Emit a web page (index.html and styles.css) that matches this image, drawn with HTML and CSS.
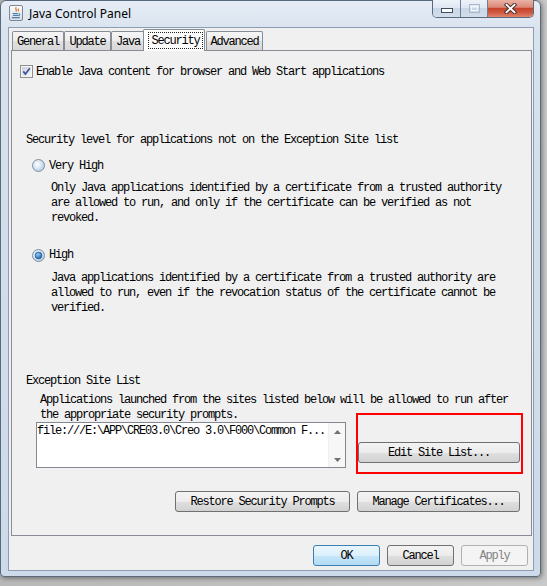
FILE: index.html
```html
<!DOCTYPE html>
<html>
<head>
<meta charset="utf-8">
<title>Java Control Panel</title>
<link rel="stylesheet" href="styles.css">
</head>
<body>
<div class="window">
  <div class="titlebar">
    <svg class="app-icon" width="14" height="16" viewBox="0 0 14 16">
      <defs><linearGradient id="ig" x1="0" y1="0" x2="0" y2="1"><stop offset="0" stop-color="#fdfdfd"/><stop offset="1" stop-color="#d6dce4"/></linearGradient></defs>
      <rect x="0.5" y="0.5" width="13" height="15" rx="1.5" fill="url(#ig)" stroke="#7d8794"/>
      <path d="M7.3 2.3c-2 1.5 1.3 2.4-.4 4.3M9.5 3.6c-1.3.9.7 1.5-.3 2.7" stroke="#e2651a" fill="none" stroke-width="1.1"/>
      <path d="M3.5 8.5h5.5M4 10.4h5M2.8 12.6h8M9.6 8.8c1.6-.2 1.5 1.6-.5 1.9" stroke="#4f7ea6" fill="none" stroke-width="1.1"/>
    </svg>
    <span class="title">Java Control Panel</span>
    <div class="caption-buttons">
      <div class="cap cap-min">
        <svg width="12" height="5" viewBox="0 0 12 5"><rect x="0.5" y="0.5" width="11" height="4" fill="#fff" stroke="#3e4e62"/></svg>
      </div>
      <div class="cap cap-max">
        <svg width="11" height="9" viewBox="0 0 11 9"><rect x="0.5" y="0.5" width="10" height="8" fill="none" stroke="#a9b8ca"/><rect x="2.5" y="2.5" width="6" height="4" fill="none" stroke="#f4f7fb"/></svg>
      </div>
      <div class="cap cap-close">
        <svg width="13" height="11" viewBox="0 0 13 11"><path d="M2.5 1.8 L10.5 9.2 M10.5 1.8 L2.5 9.2" stroke="#47302c" stroke-width="3.8" stroke-linecap="square"/><path d="M2.5 1.8 L10.5 9.2 M10.5 1.8 L2.5 9.2" stroke="#ffffff" stroke-width="1.9" stroke-linecap="square"/></svg>
      </div>
    </div>
  </div>

  <div class="client">
    <div class="tabs">
      <div class="tab tab-general">General</div>
      <div class="tab tab-update">Update</div>
      <div class="tab tab-java">Java</div>
      <div class="tab tab-selected"><span class="focus">Security</span></div>
      <div class="tab tab-advanced">Advanced</div>
    </div>

    <div class="panel">
      <div class="check-row">
        <svg width="13" height="13" viewBox="0 0 13 13">
          <defs><linearGradient id="cg" x1="0" y1="0" x2="1" y2="1"><stop offset="0" stop-color="#cbd0d7"/><stop offset="1" stop-color="#f7f7f7"/></linearGradient></defs>
          <rect x="0.5" y="0.5" width="12" height="12" fill="#f6f6f6" stroke="#8e8f8f"/>
          <rect x="2" y="2" width="9" height="9" fill="url(#cg)"/>
          <path d="M3.3 6.4 L5.4 9 L9.8 3.2" stroke="#3a56a0" stroke-width="1.7" fill="none"/>
        </svg>
        <span class="nudge">Enable Java content for browser and Web Start applications</span>
      </div>

      <div class="heading">Security level for applications not on the Exception Site list</div>

      <div class="radio-row radio-first">
        <svg width="13" height="13" viewBox="0 0 13 13">
          <defs><radialGradient id="rg1" cx="0.4" cy="0.4" r="0.6"><stop offset="0" stop-color="#ffffff"/><stop offset="1" stop-color="#b9d1ea"/></radialGradient></defs>
          <circle cx="6.5" cy="6.5" r="6" fill="url(#rg1)" stroke="#7e8fa3"/>
        </svg>
        <span class="nudge">Very High</span>
      </div>
      <div class="desc">Only Java applications identified by a certificate from a trusted authority<br>are allowed to run, and only if the certificate can be verified as not<br>revoked.</div>

      <div class="radio-row radio-second">
        <svg width="13" height="13" viewBox="0 0 13 13">
          <defs>
            <radialGradient id="rg2" cx="0.4" cy="0.4" r="0.6"><stop offset="0" stop-color="#ffffff"/><stop offset="1" stop-color="#b9d1ea"/></radialGradient>
            <radialGradient id="rd2" cx="0.4" cy="0.35" r="0.7"><stop offset="0" stop-color="#8fd0f5"/><stop offset="1" stop-color="#1b5aa0"/></radialGradient>
          </defs>
          <circle cx="6.5" cy="6.5" r="6" fill="url(#rg2)" stroke="#7e8fa3"/>
          <circle cx="6.5" cy="6.5" r="3.4" fill="url(#rd2)" stroke="#24508a" stroke-width="0.6"/>
        </svg>
        <span>High</span>
      </div>
      <div class="desc">Java applications identified by a certificate from a trusted authority are<br>allowed to run, even if the revocation status of the certificate cannot be<br>verified.</div>

      <div class="section-title">Exception Site List</div>
      <div class="section-desc">Applications launched from the sites listed below will be allowed to run after<br>the appropriate security prompts.</div>

      <div class="site-row">
        <div class="site-list">
          <div class="site-item">file:///E:\APP\CRE03.0\Creo 3.0\F000\Common F...</div>
          <div class="scrollbar">
            <svg width="7" height="4" viewBox="0 0 7 4"><path d="M0 4 L3.5 0 L7 4 Z" fill="#707070"/></svg>
            <svg width="7" height="4" viewBox="0 0 7 4"><path d="M0 0 L3.5 4 L7 0 Z" fill="#707070"/></svg>
          </div>
        </div>
        <button class="btn btn-edit">Edit Site List...</button>
      </div>

      <div class="action-row">
        <button class="btn btn-restore">Restore Security Prompts</button>
        <button class="btn btn-manage">Manage Certificates...</button>
      </div>
    </div>

    <div class="dialog-buttons">
      <button class="btn btn-dialog btn-default">OK</button>
      <button class="btn btn-dialog">Cancel</button>
      <button class="btn btn-dialog btn-disabled">Apply</button>
    </div>
  </div>
</div>
<div class="annotation"></div>
</body>
</html>
```

FILE: styles.css
```css
body {
  margin: 0;
  width: 547px;
  height: 586px;
  overflow: hidden;
  position: relative;
  background: linear-gradient(90deg, #b8b8b8 0%, #c9c9c9 100%);
  font-family: "Courier New", "Liberation Mono", monospace;
  font-size: 12px;
  letter-spacing: -1.2px;
  color: #000;
}

.window {
  box-sizing: border-box;
  width: 541px;
  height: 577px;
  border: 1px solid #5b6a7b;
  border-radius: 6px 6px 4px 4px;
  background: linear-gradient(180deg, #e6edf6 0px, #d9e3ef 28px, #d3deeb 200px, #cddaea 100%);
  padding: 0 6px 5px 7px;
  display: flex;
  flex-direction: column;
  box-shadow: 1px 1px 5px rgba(0, 0, 0, 0.45);
}

.titlebar {
  height: 26px;
  display: flex;
  align-items: flex-start;
  flex: none;
}

.app-icon {
  margin: 4px 0 0 1px;
  flex: none;
}

.title {
  margin: 1px 0 0 6px;
  font-family: "Noto Sans", "Open Sans", sans-serif;
  font-size: 12px;
  letter-spacing: 0;
  line-height: 24px;
  color: #000;
}

.caption-buttons {
  margin-left: auto;
  margin-top: -1px;
  box-sizing: border-box;
  width: 102px;
  height: 18px;
  display: flex;
  border: 1px solid #5a6a7e;
  border-top: none;
  border-radius: 0 0 5px 5px;
  overflow: hidden;
}

.cap {
  display: flex;
  justify-content: center;
  box-sizing: border-box;
  height: 100%;
}

.cap-min {
  width: 28px;
  border-right: 1px solid #6f7f93;
  background: linear-gradient(180deg, #eef3f9 0%, #dfe7f1 45%, #c9d6e6 50%, #d3deeb 100%);
  align-items: flex-end;
  padding-bottom: 4px;
}

.cap-max {
  width: 27px;
  border-right: 1px solid #6f7f93;
  background: linear-gradient(180deg, #eef3f9 0%, #dfe7f1 45%, #c9d6e6 50%, #d3deeb 100%);
  align-items: center;
}

.cap-close {
  flex: 1;
  background: linear-gradient(180deg, #eab2a6 0%, #dc8a79 42%, #c8432c 50%, #cf5a43 75%, #e0866c 100%);
  align-items: center;
}

.client {
  box-sizing: border-box;
  height: 544px;
  border: 1px solid #8e9eb2;
  background: #f0f0f0;
  display: flex;
  flex-direction: column;
}

.tabs {
  display: flex;
  align-items: flex-end;
  height: 19px;
  margin-top: 3px;
  padding-left: 3px;
  flex: none;
}

.tab {
  box-sizing: border-box;
  height: 19px;
  border: 1px solid #898c95;
  border-bottom: none;
  border-radius: 2px 2px 0 0;
  background: linear-gradient(180deg, #f5f5f5 0%, #ededed 50%, #e0e0e0 51%, #d8d8d8 100%);
  text-align: center;
  line-height: 20px;
  flex: none;
}

.tab-general { width: 52px; }
.tab-update { width: 47px; }
.tab-java { width: 34px; }
.tab-advanced { width: 57px; }

.tab-selected {
  width: 62px;
  height: 22px;
  margin: 0 1px -1px -2px;
  background: #fcfcfc;
  position: relative;
  z-index: 1;
}

.focus {
  display: block;
  box-sizing: border-box;
  margin: 2px 1px 0 4px;
  height: 17px;
  border: 1px dotted #222;
  line-height: 16px;
  text-align: center;
}

.panel {
  box-sizing: border-box;
  height: 486px;
  margin: 0 1px 0 2px;
  border: 1px solid #898c95;
  background: #f0f0f0;
  flex: none;
}

.check-row {
  display: flex;
  align-items: center;
  height: 13px;
  margin: 14px 0 0 8px;
  gap: 3px;
  line-height: 15px;
}

.nudge {
  padding-top: 2px;
}

.check-row svg,
.radio-row svg {
  flex: none;
}

.heading {
  margin: 55px 0 0 14px;
  line-height: 15px;
}

.radio-row {
  display: flex;
  align-items: center;
  height: 13px;
  margin-left: 20px;
  gap: 4px;
  line-height: 15px;
}

.radio-first { margin-top: 11px; }
.radio-second { margin-top: 23px; }

.desc {
  margin: 9px 0 0 39px;
  line-height: 15px;
  white-space: nowrap;
}

.section-title {
  margin: 58px 0 0 14px;
  line-height: 15px;
}

.section-desc {
  margin: 4px 0 0 28px;
  line-height: 15px;
  white-space: nowrap;
}

.site-row {
  display: flex;
  align-items: flex-start;
  margin-left: 24px;
  margin-top: -1px;
}

.site-list {
  box-sizing: border-box;
  width: 310px;
  height: 46px;
  border: 1px solid #828790;
  background: #fff;
  display: flex;
}

.site-item {
  flex: 1;
  line-height: 17px;
  white-space: nowrap;
  overflow: hidden;
}

.scrollbar {
  width: 17px;
  box-sizing: border-box;
  display: flex;
  flex-direction: column;
  justify-content: space-between;
  align-items: center;
  padding: 7px 0 5px;
  background: #f7f7f7;
  border-left: 1px solid #f0f0f0;
}

.btn {
  box-sizing: border-box;
  height: 21px;
  padding: 0;
  border: 1px solid #707070;
  border-radius: 3px;
  background: linear-gradient(180deg, #f3f3f3 0%, #ececec 50%, #dfdfdf 51%, #d2d2d2 100%);
  font: inherit;
  letter-spacing: inherit;
  color: #000;
  line-height: 20px;
  text-align: center;
  flex: none;
}

.btn-edit {
  width: 162px;
  margin: 20px 0 0 12px;
}

.action-row {
  display: flex;
  gap: 7px;
  margin: 23px 0 0 163px;
}

.btn-restore { width: 175px; }
.btn-manage { width: 163px; }

.dialog-buttons {
  display: flex;
  justify-content: flex-end;
  gap: 7px;
  padding: 9px 5px 0 0;
}

.btn-dialog { width: 67px; }

.btn-default {
  border-color: #3c7fb1;
  background: linear-gradient(180deg, #eaf6fd 0%, #dbf0fc 50%, #c6e6f9 51%, #b3dbf3 100%);
}

.btn-disabled {
  border-color: #adb2b5;
  background: #f4f4f4;
  color: #838383;
}

.annotation {
  position: absolute;
  left: 356px;
  top: 413px;
  width: 167px;
  height: 61px;
  box-sizing: border-box;
  border: 2px solid #f00;
}
```
